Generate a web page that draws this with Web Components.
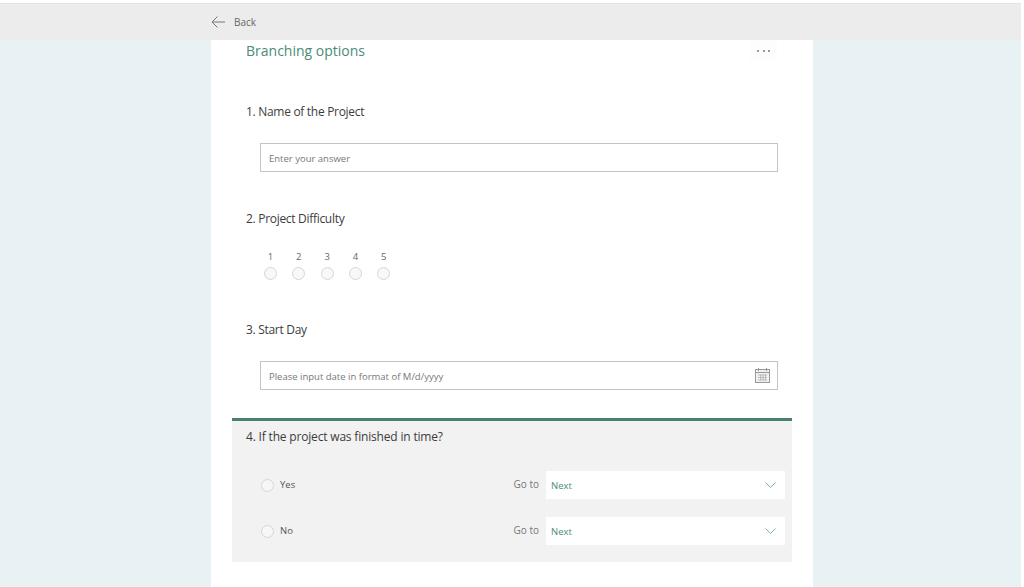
<!DOCTYPE html>
<html>
<head>
<meta charset="utf-8">
<style>
  html, body { margin: 0; height: 587px; overflow: hidden; }
  body { background: #fff; font-family: "Open Sans", sans-serif; color: #333; }
</style>
</head>
<body>
<form-page>
  <form-question num="1. " label="Name of the Project" top="43"><text-answer placeholder="Enter your answer"></text-answer></form-question>
  <form-question num="2. " label="Project Difficulty" top="39"><rating-answer></rating-answer></form-question>
  <form-question num="3. " label="Start Day" top="42"><text-answer placeholder="Please input date in format of M/d/yyyy" date></text-answer></form-question>
  <branch-question num="4. " label="If the project was finished in time?">
    <branch-row label="Yes"></branch-row>
    <branch-row label="No"></branch-row>
  </branch-question>
</form-page>
<script>
class FormPage extends HTMLElement {
  constructor() {
    super();
    this.attachShadow({ mode: 'open' });
    this.shadowRoot.innerHTML = `
      <style>
        :host { display: flex; flex-direction: column; height: 587px; margin-right: 3px; background: #e8f1f3; }
        .strip { height: 3px; background: #fff; border-bottom: 1px solid #e2e2e2; flex: none; }
        .bar { height: 36px; background: #ececec; flex: none; display: flex; align-items: center; padding-left: 211px; gap: 9px; font-size: 10px; color: #666; }
        .bar svg { display: block; }
        .sheet { width: 602px; margin-left: 211px; background: #fff; flex: 1; box-sizing: border-box; padding: 0 21px; }
        .head { display: flex; justify-content: space-between; align-items: center; height: 21px; padding-left: 14px; }
        .title { font-size: 14px; line-height: 20px; color: #4b8b7a; }
        .more { width: 27px; height: 21px; margin-right: 15px; background: #fdfdfd; display: flex; align-items: center; justify-content: center; gap: 3.500px; }
        .more b { display: block; width: 2px; height: 2px; background: #999; }
      </style>
      <div class="strip"></div>
      <div class="bar">
        <svg width="14" height="12" viewBox="0 0 14 12" fill="none" stroke="#777" stroke-width="1"><path d="M14 6H1M6.500.5 1 6l5.500 5.500"/></svg>
        <span>Back</span>
      </div>
      <div class="sheet">
        <div class="head"><span class="title">Branching options</span><span class="more"><b></b><b></b><b></b></span></div>
        <slot></slot>
      </div>`;
  }
}
class FormQuestion extends HTMLElement {
  constructor() {
    super();
    this.attachShadow({ mode: 'open' });
    this.shadowRoot.innerHTML = `
      <style>
        :host { display: block; padding: 0 14px; }
        .q { font-size: 12px; line-height: 16px; color: #3c3c3c; letter-spacing: -.3px; }
      </style>
      <div class="q"></div>
      <slot></slot>`;
  }
  connectedCallback() {
    this.shadowRoot.querySelector('.q').textContent = this.getAttribute('num') + this.getAttribute('label');
    this.style.marginTop = this.getAttribute('top') + 'px';
  }
}
class TextAnswer extends HTMLElement {
  constructor() {
    super();
    this.attachShadow({ mode: 'open' });
    this.shadowRoot.innerHTML = `
      <style>
        :host { display: block; margin: 23px 0 0 14px; }
        .box { height: 29px; width: 518px; box-sizing: border-box; border: 1px solid #c4c4c4; display: flex; align-items: center; justify-content: space-between; padding: 0 7px 0 8px; font-size: 9.500px; color: #777; }
        .ph { padding-top: 1px; }
        svg { display: block; }
      </style>
      <div class="box"><span class="ph"></span></div>`;
  }
  connectedCallback() {
    const box = this.shadowRoot.querySelector('.box');
    this.shadowRoot.querySelector('.ph').textContent = this.getAttribute('placeholder');
    if (this.hasAttribute('date')) {
      box.insertAdjacentHTML('beforeend', `<svg width="15" height="15" viewBox="0 0 15 15" fill="none" stroke="#999"><rect x=".5" y="1.500" width="14" height="13" fill="#f0f0f0"/><path d="M.5 4.500h14M3.500 0v3M11.500 0v3"/><path d="M3 7h9M3 9.500h9M3 12h9M5.500 6.500v6M8 6.500v6M10.500 6.500v6" stroke="#aaa" stroke-width=".7"/></svg>`);
    }
  }
}
class RatingAnswer extends HTMLElement {
  constructor() {
    super();
    this.attachShadow({ mode: 'open' });
    let items = '';
    for (let i = 1; i <= 5; i++) items += `<div class="item"><span>${i}</span><i></i></div>`;
    this.shadowRoot.innerHTML = `
      <style>
        :host { display: flex; margin: 24px 0 0 18px; gap: 15.300px; }
        .item { display: flex; flex-direction: column; align-items: center; width: 13px; font-size: 9.500px; line-height: 12px; color: #666; gap: 4px; }
        i { display: block; width: 13px; height: 13px; box-sizing: border-box; border: 1px solid #d6d6d6; border-radius: 50%; background: #f8f8f8; }
      </style>${items}`;
  }
}
class BranchQuestion extends HTMLElement {
  constructor() {
    super();
    this.attachShadow({ mode: 'open' });
    this.shadowRoot.innerHTML = `
      <style>
        :host { display: block; margin-top: 28px; background: #f2f2f2; border-top: 3px solid #4a806f; height: 144px; box-sizing: border-box; padding: 8px 7px 0 14px; }
        .q { font-size: 12px; line-height: 16px; color: #3c3c3c; letter-spacing: -.18px; }
        .rows { margin-top: 26px; display: flex; flex-direction: column; gap: 18px; }
      </style>
      <div class="q"></div>
      <div class="rows"><slot></slot></div>`;
  }
  connectedCallback() {
    this.shadowRoot.querySelector('.q').textContent = this.getAttribute('num') + this.getAttribute('label');
  }
}
class BranchRow extends HTMLElement {
  constructor() {
    super();
    this.attachShadow({ mode: 'open' });
    this.shadowRoot.innerHTML = `
      <style>
        :host { display: flex; align-items: center; height: 28px; padding-left: 15px; font-size: 9.500px; color: #555; }
        i { display: block; width: 13px; height: 13px; box-sizing: border-box; border: 1px solid #d6d6d6; border-radius: 50%; background: #f6f6f6; margin-right: 6px; }
        .lbl { flex: 1; padding-bottom: 2px; }
        .go { font-size: 10px; color: #777; margin-right: 7px; padding-bottom: 2px; }
        .sel { width: 239px; height: 28px; background: #fff; display: flex; align-items: center; justify-content: space-between; padding: 0 9px 0 5px; box-sizing: border-box; color: #4b8b7a; }
        svg { display: block; }
      </style>
      <i></i><span class="lbl"></span><span class="go">Go to</span>
      <div class="sel"><span>Next</span><svg width="11" height="6" viewBox="0 0 11 6" fill="none" stroke="#7fb0a2"><path d="M.5.500l5 5 5-5"/></svg></div>`;
  }
  connectedCallback() {
    this.shadowRoot.querySelector('.lbl').textContent = this.getAttribute('label');
  }
}
customElements.define('form-page', FormPage);
customElements.define('form-question', FormQuestion);
customElements.define('text-answer', TextAnswer);
customElements.define('rating-answer', RatingAnswer);
customElements.define('branch-question', BranchQuestion);
customElements.define('branch-row', BranchRow);
</script>
</body>
</html>
